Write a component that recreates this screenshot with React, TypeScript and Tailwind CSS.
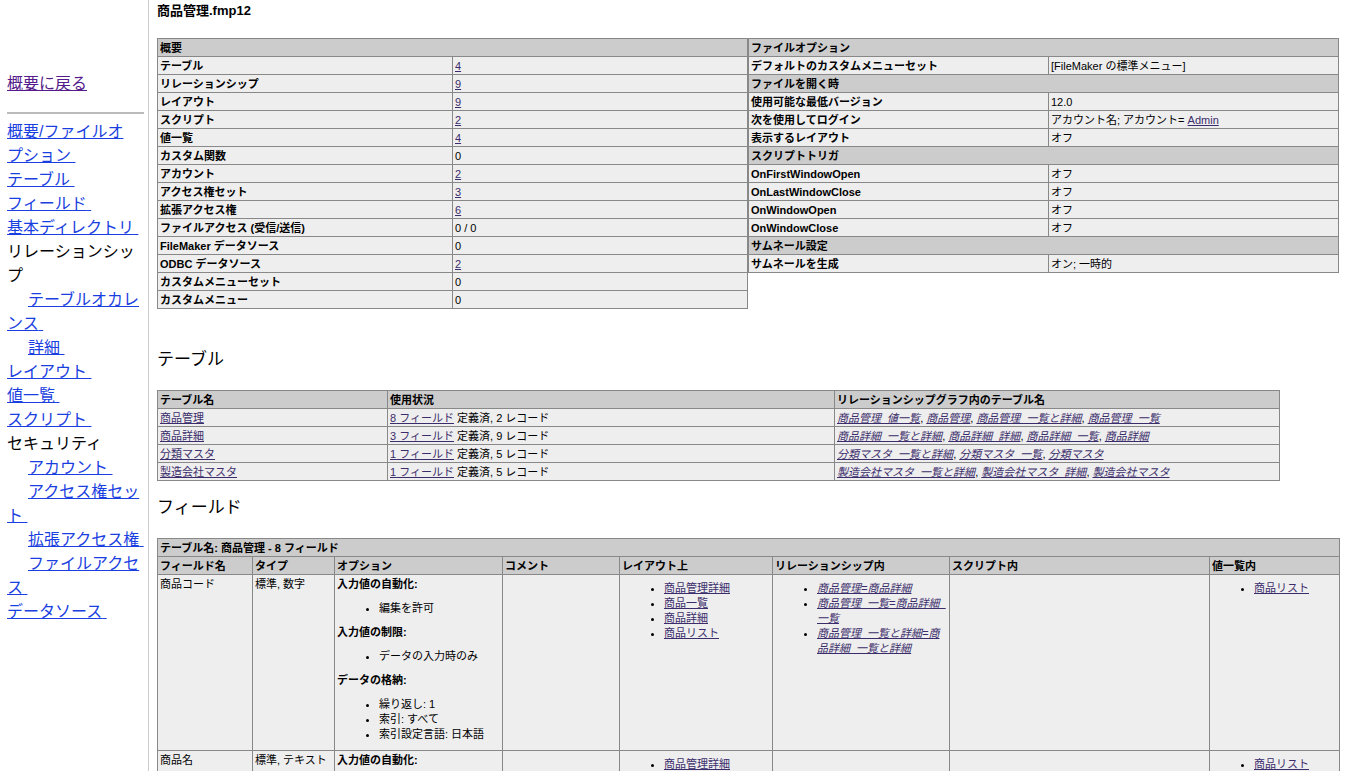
const F = { fontFamily: '"Liberation Sans", "Noto Sans CJK JP", sans-serif' };

const td = "border border-[#888] bg-[#eeeeee] px-[2px] h-[18px] align-middle";
const th = "border border-[#888] bg-[#cccccc] px-[2px] h-[18px] font-bold text-left align-middle";
const L = ({ children, i }: { children: React.ReactNode; i?: boolean }) => (
  <a href="#" className={`underline text-[#3b2d6b] ${i ? "italic" : ""}`}>{children}</a>
);

function Sidebar() {
  const s = "text-[#1a3fe0] underline";
  const items: [string[], number, boolean][] = [
    [["概要/ファイルオ", "プション"], 0, true],
    [["テーブル"], 0, true],
    [["フィールド"], 0, true],
    [["基本ディレクトリ"], 0, true],
    [["リレーションシッ", "プ"], 0, false],
    [["テーブルオカレ", "ンス"], 1, true],
    [["詳細"], 1, true],
    [["レイアウト"], 0, true],
    [["値一覧"], 0, true],
    [["スクリプト"], 0, true],
    [["セキュリティ"], 0, false],
    [["アカウント"], 1, true],
    [["アクセス権セッ", "ト"], 1, true],
    [["拡張アクセス権"], 1, true],
    [["ファイルアクセ", "ス"], 1, true],
    [["データソース"], 0, true],
  ];
  return (
    <div className="w-[149px] shrink-0 border-r border-[#ccc] min-h-[771px] pl-[7px] pr-[4px] text-[16px] leading-[24px] whitespace-nowrap">
      <div className="pt-[72px]">
        <a href="#" className="underline text-[#551a8b]">概要に戻る</a>
      </div>
      <div className="mt-[16px] mb-[6px] border-t-2 border-[#bbb]" />
      {items.map(([lines, ind, link]) => (
        <div key={lines.join("")}>
          {lines.map((t, k) => (
            <div key={t}>
              {ind && k === 0 ? <span className="inline-block w-[21px]" /> : null}
              {link ? (
                <a href="#" className={s}>{t}{k === lines.length - 1 ? "\u00a0" : ""}</a>
              ) : (
                <span className="text-black">{t}</span>
              )}
            </div>
          ))}
        </div>
      ))}
    </div>
  );
}

const overview: [string, string, boolean][] = [
  ["テーブル", "4", true], ["リレーションシップ", "9", true], ["レイアウト", "9", true],
  ["スクリプト", "2", true], ["値一覧", "4", true], ["カスタム関数", "0", false],
  ["アカウント", "2", true], ["アクセス権セット", "3", true], ["拡張アクセス権", "6", true],
  ["ファイルアクセス (受信/送信)", "0 / 0", false], ["FileMaker データソース", "0", false],
  ["ODBC データソース", "2", true], ["カスタムメニューセット", "0", false], ["カスタムメニュー", "0", false],
];

function Bullets({ items, link, i, pl = "pl-[38px]" }: { items: string[]; link?: boolean; i?: boolean; pl?: string }) {
  return (
    <ul className={`list-disc ${pl} my-[4px]`}>
      {items.map((t) => (
        <li key={t} className="leading-[15px]">{link ? <L i={i}>{t}</L> : t}</li>
      ))}
    </ul>
  );
}

export default function App() {
  return (
    <div className="flex bg-white text-black text-[11px] leading-[14px] overflow-hidden h-[771px]" style={F}>
      <Sidebar />
      <div className="pl-[8px] flex-1 pr-[6px]">
        <div className="text-[13px] font-bold pt-[4px] h-[38px]">商品管理.fmp12</div>
        <div className="flex items-start">
          <table className="border-collapse w-[591px]">
            <tbody>
              <tr><td colSpan={2} className={th}>概要</td></tr>
              {overview.map(([a, b, l]) => (
                <tr key={a}>
                  <td className={`${td} font-bold w-[295px]`}>{a}</td>
                  <td className={td}>{l ? <L>{b}</L> : b}</td>
                </tr>
              ))}
            </tbody>
          </table>
          <table className="border-collapse w-[591px]">
            <tbody>
              <tr><td colSpan={2} className={th}>ファイルオプション</td></tr>
              <tr><td className={`${td} font-bold w-[300px]`}>デフォルトのカスタムメニューセット</td><td className={td}>[FileMaker の標準メニュー]</td></tr>
              <tr><td colSpan={2} className={th}>ファイルを開く時</td></tr>
              <tr><td className={`${td} font-bold`}>使用可能な最低バージョン</td><td className={td}>12.0</td></tr>
              <tr><td className={`${td} font-bold`}>次を使用してログイン</td><td className={td}>アカウント名; アカウント= <L>Admin</L></td></tr>
              <tr><td className={`${td} font-bold`}>表示するレイアウト</td><td className={td}>オフ</td></tr>
              <tr><td colSpan={2} className={th}>スクリプトトリガ</td></tr>
              {["OnFirstWindowOpen", "OnLastWindowClose", "OnWindowOpen", "OnWindowClose"].map((t) => (
                <tr key={t}><td className={`${td} font-bold`}>{t}</td><td className={td}>オフ</td></tr>
              ))}
              <tr><td colSpan={2} className={th}>サムネール設定</td></tr>
              <tr><td className={`${td} font-bold`}>サムネールを生成</td><td className={td}>オン; 一時的</td></tr>
            </tbody>
          </table>
        </div>

        <div className="text-[17px] leading-[20px] mt-[41px] mb-[20px]">テーブル</div>
        <table className="border-collapse w-[1123px]">
          <tbody>
            <tr>
              <td className={`${th} w-[230px]`}>テーブル名</td>
              <td className={`${th} w-[447px]`}>使用状況</td>
              <td className={th}>リレーションシップグラフ内のテーブル名</td>
            </tr>
            {[
              ["商品管理", "8", "2", ["商品管理_値一覧", "商品管理", "商品管理_一覧と詳細", "商品管理_一覧"]],
              ["商品詳細", "3", "9", ["商品詳細_一覧と詳細", "商品詳細_詳細", "商品詳細_一覧", "商品詳細"]],
              ["分類マスタ", "1", "5", ["分類マスタ_一覧と詳細", "分類マスタ_一覧", "分類マスタ"]],
              ["製造会社マスタ", "1", "5", ["製造会社マスタ_一覧と詳細", "製造会社マスタ_詳細", "製造会社マスタ"]],
            ].map(([n, f, r, g]) => (
              <tr key={n as string}>
                <td className={td}><L>{n as string}</L></td>
                <td className={td}><L>{f} フィールド</L> 定義済, {r} レコード</td>
                <td className={td}>
                  {(g as string[]).map((x, k) => (
                    <span key={x}>{k > 0 ? ", " : ""}<L i>{x}</L></span>
                  ))}
                </td>
              </tr>
            ))}
          </tbody>
        </table>

        <div className="text-[17px] leading-[20px] mt-[17px] mb-[20px]">フィールド</div>
        <table className="border-collapse w-[1183px]">
          <tbody>
            <tr><td colSpan={8} className={th}>テーブル名: 商品管理 - 8 フィールド</td></tr>
            <tr>
              <td className={`${th} w-[95px]`}>フィールド名</td>
              <td className={`${th} w-[82px]`}>タイプ</td>
              <td className={`${th} w-[168px]`}>オプション</td>
              <td className={`${th} w-[117px]`}>コメント</td>
              <td className={`${th} w-[153px]`}>レイアウト上</td>
              <td className={`${th} w-[177px]`}>リレーションシップ内</td>
              <td className={`${th} w-[260px]`}>スクリプト内</td>
              <td className={th}>値一覧内</td>
            </tr>
            <tr>
              <td className={`${td} align-top h-[176px] pt-[2px]`}>商品コード</td>
              <td className={`${td} align-top pt-[2px]`}>標準, 数字</td>
              <td className={`${td} align-top pt-[2px]`}>
                <div className="font-bold">入力値の自動化:</div>
                <ul className="list-disc pl-[42px] my-[10px]"><li>編集を許可</li></ul>
                <div className="font-bold">入力値の制限:</div>
                <ul className="list-disc pl-[42px] my-[10px]"><li>データの入力時のみ</li></ul>
                <div className="font-bold">データの格納:</div>
                <ul className="list-disc pl-[42px] mt-[10px] mb-[8px] leading-[15px]"><li>繰り返し: 1</li><li>索引: すべて</li><li>索引設定言語: 日本語</li></ul>
              </td>
              <td className={`${td} align-top`}></td>
              <td className={`${td} align-top pt-[2px]`}>
                <Bullets items={["商品管理詳細", "商品一覧", "商品詳細", "商品リスト"]} link pl="pl-[42px]" />
              </td>
              <td className={`${td} align-top pt-[2px]`}>
                <ul className="list-disc pl-[42px] my-[4px] leading-[15px]">
                  <li><L i>商品管理=商品詳細</L></li>
                  <li><L i>商品管理_一覧=商品詳細_一覧</L></li>
                  <li><L i>商品管理_一覧と詳細=商品詳細_一覧と詳細</L></li>
                </ul>
              </td>
              <td className={`${td} align-top`}></td>
              <td className={`${td} align-top pt-[2px]`}>
                <Bullets items={["商品リスト"]} link pl="pl-[42px]" />
              </td>
            </tr>
            <tr>
              <td className={`${td} align-top pt-[2px]`}>商品名</td>
              <td className={`${td} align-top pt-[2px]`}>標準, テキスト</td>
              <td className={`${td} align-top pt-[2px]`}><div className="font-bold">入力値の自動化:</div></td>
              <td className={td}></td>
              <td className={`${td} align-top pt-[2px]`}><Bullets items={["商品管理詳細", "商品一覧"]} link pl="pl-[42px]" /></td>
              <td className={td}></td>
              <td className={td}></td>
              <td className={`${td} align-top pt-[2px]`}><Bullets items={["商品リスト"]} link pl="pl-[42px]" /></td>
            </tr>
          </tbody>
        </table>
      </div>
    </div>
  );
}
